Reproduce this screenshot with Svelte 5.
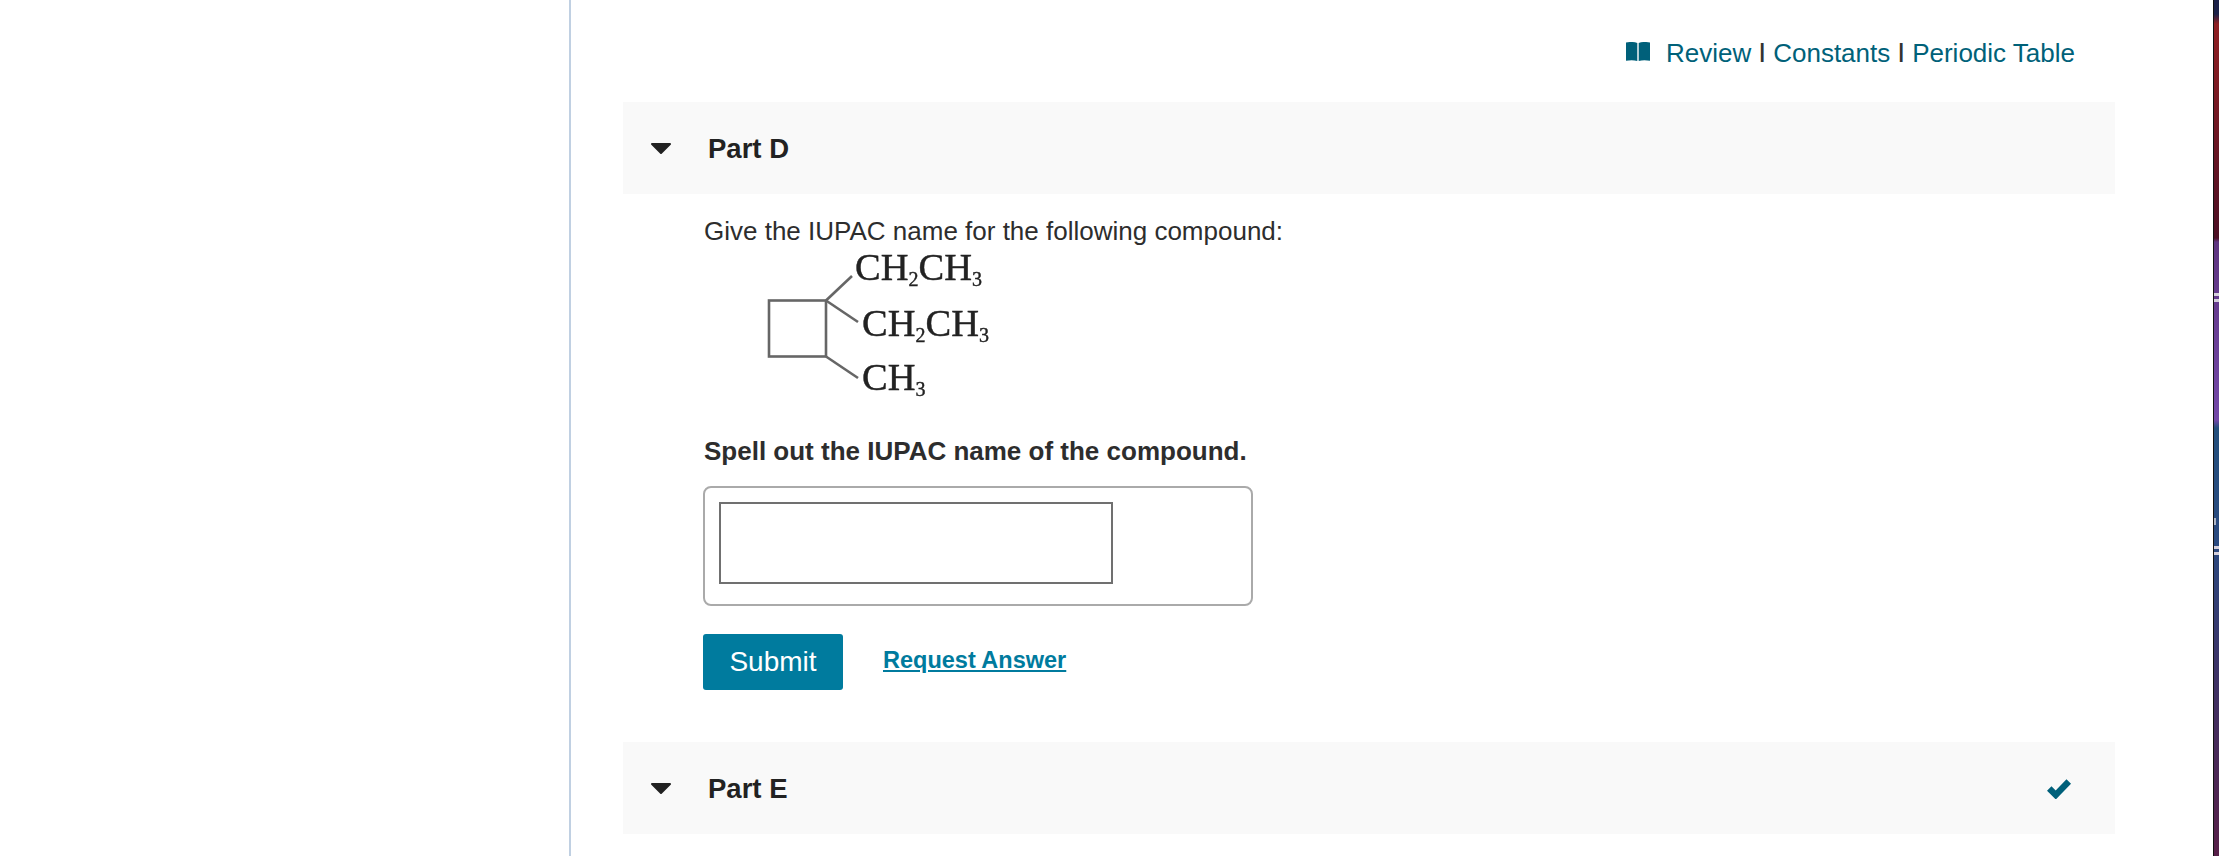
<script lang="ts">
  let answer = $state('');
  const parts = { current: 'Part D', next: 'Part E' };
</script>

<div class="page">
  <aside class="sidebar"></aside>

  <main class="content">
    <nav class="links">
      <svg class="book" viewBox="0 0 24 20" aria-hidden="true">
        <path d="M0 0.5 C4 -0.3 8 -0.3 11.3 1 L11.3 19 C8 18 4 18 0 18.8 Z" />
        <path d="M24 0.5 C20 -0.3 16 -0.3 12.7 1 L12.7 19 C16 18 20 18 24 18.8 Z" />
      </svg>
      <a href="#review">Review</a>
      <span class="sep">|</span>
      <a href="#constants">Constants</a>
      <span class="sep">|</span>
      <a href="#table">Periodic Table</a>
    </nav>

    <header class="part-head">
      <svg class="caret" viewBox="0 0 22 13" aria-hidden="true">
        <path d="M2 2 L20 2 L11 11 Z" />
      </svg>
      <h2>{parts.current}</h2>
    </header>

    <section class="part-body">
      <p class="prompt">Give the IUPAC name for the following compound:</p>

      <svg class="compound" width="300" height="150" viewBox="0 0 300 150">
        <g class="bonds">
          <rect x="66" y="62.5" width="57" height="56" />
          <path d="M123 62.5 L149 38" />
          <path d="M123 62.5 L155 84" />
          <path d="M123 118.5 L155 140" />
        </g>
        <text x="152" y="42">CH<tspan class="sub" dy="6">2</tspan><tspan dy="-6">CH</tspan><tspan class="sub" dy="6">3</tspan></text>
        <text x="159" y="98">CH<tspan class="sub" dy="6">2</tspan><tspan dy="-6">CH</tspan><tspan class="sub" dy="6">3</tspan></text>
        <text x="159" y="152">CH<tspan class="sub" dy="6">3</tspan></text>
      </svg>

      <p class="instruction">Spell out the IUPAC name of the compound.</p>

      <div class="answer-box">
        <input type="text" bind:value={answer} />
      </div>

      <div class="actions">
        <button type="button">Submit</button>
        <a class="request" href="#answer">Request Answer</a>
      </div>
    </section>

    <header class="part-head">
      <svg class="caret" viewBox="0 0 22 13" aria-hidden="true">
        <path d="M2 2 L20 2 L11 11 Z" />
      </svg>
      <h2>{parts.next}</h2>
      <svg class="check" viewBox="0 0 24 19" aria-hidden="true">
        <path d="M3 9.5 L9 15.5 L21 3" />
      </svg>
    </header>
  </main>

  <div class="wallpaper">
    <span class="mark one"></span>
    <span class="mark tick"></span>
    <span class="mark two"></span>
  </div>
</div>

<style>
  :global(body) {
    margin: 0;
    background: #fff;
  }

  .page {
    display: flex;
    height: 856px;
    overflow: hidden;
    font-family: "Liberation Sans", Arial, sans-serif;
    color: #2d2d2d;
  }

  .sidebar {
    width: 569px;
    flex-shrink: 0;
    border-right: 2px solid #c0d0e2;
  }

  .content {
    flex: 1;
    padding: 0 98px 0 52px;
    min-width: 0;
  }

  .links {
    height: 102px;
    box-sizing: border-box;
    display: flex;
    justify-content: flex-end;
    align-items: baseline;
    padding: 38px 40px 0 0;
    font-size: 26px;
    line-height: 31px;
    gap: 8px;
  }

  .links a {
    color: #006179;
    text-decoration: none;
  }

  .sep {
    color: #333;
    font-size: 21px;
    font-weight: 700;
    transform: translateY(-4px);
  }

  .book {
    width: 24px;
    height: 20px;
    align-self: flex-start;
    margin: 4px 8px 0 0;
    fill: #00607a;
  }

  .part-head {
    height: 92px;
    background: #f9f9f9;
    display: flex;
    align-items: center;
  }

  .caret {
    width: 22px;
    height: 13px;
    margin-left: 27px;
    fill: #222;
    stroke: #222;
    stroke-width: 2;
    stroke-linejoin: round;
  }

  h2 {
    margin: 1px 0 0 36px;
    font-size: 27.5px;
    font-weight: 700;
    color: #222;
  }

  .check {
    width: 26px;
    height: 21px;
    margin-left: auto;
    margin-right: 43px;
    fill: none;
    stroke: #00607a;
    stroke-width: 5.8;
  }

  .part-body {
    padding: 0 0 0 80px;
    height: 548px;
  }

  .prompt {
    margin: 0;
    padding: 21px 0 0 1px;
    font-size: 26px;
    line-height: 32px;
  }

  .compound {
    display: block;
    margin: -9px 0 0 0;
    filter: blur(0.6px);
    overflow: visible;
  }

  .bonds {
    fill: none;
    stroke: #666;
    stroke-width: 2.6;
  }

  .compound text {
    font-family: "Liberation Serif", "Times New Roman", serif;
    font-size: 38.5px;
    fill: #222;
    stroke: #222;
    stroke-width: 0.4;
  }

  .compound .sub {
    font-size: 20px;
  }

  .instruction {
    margin: 0;
    padding: 47px 0 0 1px;
    font-size: 26px;
    line-height: 32px;
    font-weight: 700;
  }

  .answer-box {
    margin-top: 19px;
    width: 550px;
    height: 120px;
    box-sizing: border-box;
    border: 2px solid #aaa;
    border-radius: 8px;
    padding: 14px;
  }

  input {
    display: block;
    width: 394px;
    height: 82px;
    box-sizing: border-box;
    border: 2px solid #707070;
    border-radius: 0;
    padding: 0 8px;
    outline: none;
  }

  .actions {
    display: flex;
    align-items: center;
    margin-top: 28px;
  }

  button {
    width: 140px;
    height: 56px;
    border: none;
    border-radius: 3px;
    background: #007b9e;
    color: #fff;
    font-family: inherit;
    font-size: 28px;
    padding: 0;
  }

  .request {
    margin-left: 40px;
    margin-bottom: 4px;
    font-size: 23.5px;
    font-weight: 700;
    color: #007b9e;
  }

  .wallpaper {
    position: relative;
    width: 6px;
    flex-shrink: 0;
    border-left: 1px solid #111;
    box-sizing: border-box;
    background: linear-gradient(
      to bottom,
      #1c2148 0,
      #1c2148 14px,
      #8f1f22 24px,
      #4c0f24 238px,
      #5e3580 242px,
      #7348a8 420px,
      #234f7c 428px,
      #2a4a80 540px,
      #3b3468 660px,
      #571f48 856px
    );
  }

  .mark {
    position: absolute;
    left: 0;
    width: 5px;
  }

  .one,
  .two {
    background: repeating-linear-gradient(to bottom, #d5d0dc 0, #d5d0dc 3px, transparent 3px, transparent 6px);
    height: 9px;
  }

  .one { top: 293px; }
  .two { top: 546px; }

  .tick {
    top: 518px;
    width: 2px;
    height: 7px;
    background: #aeb6c8;
  }
</style>
